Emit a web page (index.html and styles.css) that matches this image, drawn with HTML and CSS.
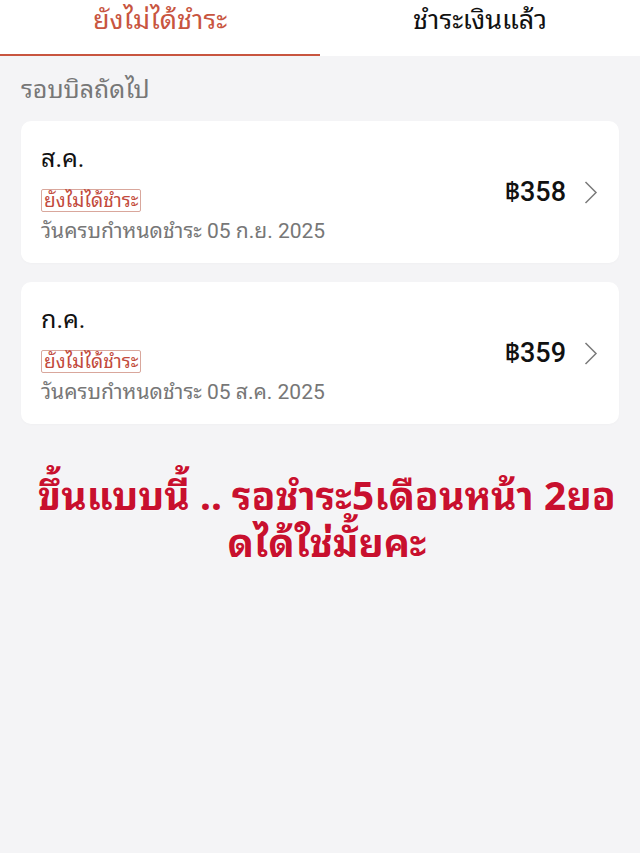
FILE: index.html
```html
<!DOCTYPE html>
<html lang="th">
<head>
<meta charset="utf-8">
<link rel="stylesheet" href="styles.css">
</head>
<body>
<div class="page">
  <div class="tabs">
    <div class="tab active">ยังไม่ได้ชำระ</div>
    <div class="tab">ชำระเงินแล้ว</div>
  </div>
  <div class="content">
    <div class="section-title">รอบบิลถัดไป</div>
    <div class="card">
      <div class="info">
        <div class="month">ส.ค.</div>
        <div class="badge">ยังไม่ได้ชำระ</div>
        <div class="due">วันครบกำหนดชำระ 05 ก.ย. 2025</div>
      </div>
      <div class="amount">฿358</div>
      <svg class="chev" width="14" height="24" viewBox="0 0 14 24"><path d="M1.5 2 L12 12.5 L1.5 23" fill="none" stroke="#7a7a7a" stroke-width="1.5"/></svg>
    </div>
    <div class="card">
      <div class="info">
        <div class="month">ก.ค.</div>
        <div class="badge">ยังไม่ได้ชำระ</div>
        <div class="due">วันครบกำหนดชำระ 05 ส.ค. 2025</div>
      </div>
      <div class="amount">฿359</div>
      <svg class="chev" width="14" height="24" viewBox="0 0 14 24"><path d="M1.5 2 L12 12.5 L1.5 23" fill="none" stroke="#7a7a7a" stroke-width="1.5"/></svg>
    </div>
    <div class="overlay-text">
      <div class="ol-line">ขึ้นแบบนี้ .. รอชำระ5เดือนหน้า 2ยอ</div>
      <div class="ol-line">ดได้ใช่มั้ยคะ</div>
    </div>
  </div>
</div>
</body>
</html>
```
FILE: styles.css
```css
html, body {
  margin: 0;
  padding: 0;
}
body {
  background: #f4f4f6;
  font-family: Roboto, "Noto Sans Thai Looped", sans-serif;
  width: 640px;
  height: 853px;
  overflow: hidden;
}
.tabs {
  display: flex;
  background: #fff;
  height: 56px;
}
.tab {
  flex: 1;
  text-align: center;
  font-size: 27px;
  line-height: 40px;
  color: #111;
  box-sizing: border-box;
  height: 56px;
}
.tab.active {
  color: #c8553f;
  border-bottom: 2px solid #c8553f;
}
.content {
  padding: 0 21px;
}
.section-title {
  font-size: 25px;
  color: #777;
  line-height: 30px;
  padding: 19px 0 16px 0;
}
.card {
  background: #fff;
  border-radius: 10px;
  height: 142px;
  display: flex;
  align-items: center;
  padding: 0 21px 0 20px;
  margin-bottom: 19px;
  box-sizing: border-box;
  box-shadow: 0 1px 3px rgba(0, 0, 0, 0.02);
}
.info {
  flex: 1;
  padding-top: 4px;
}
.month {
  font-size: 25px;
  color: #111;
  line-height: 30px;
}
.badge {
  display: inline-block;
  border: 1px solid #d9a79c;
  border-radius: 2px;
  color: #c24a3c;
  font-size: 19px;
  line-height: 21px;
  padding: 0 2px;
  margin-top: 15px;
}
.due {
  font-size: 21px;
  color: #777;
  line-height: 28px;
  margin-top: 5px;
}
.amount {
  font-size: 27px;
  font-weight: 500;
  color: #111;
  margin-right: 18px;
  margin-bottom: 8px;
}
.overlay-text {
  margin-top: 45px;
  text-align: center;
  color: #c8102e;
  font-family: "Noto Sans Thai Looped", sans-serif;
  font-size: 39px;
  font-weight: 700;
  line-height: 47px;
  padding-left: 14px;
  text-shadow: 0 0 2px #fff, 0 0 1px #fff;
}
.ol-line {
  white-space: nowrap;
}
```
